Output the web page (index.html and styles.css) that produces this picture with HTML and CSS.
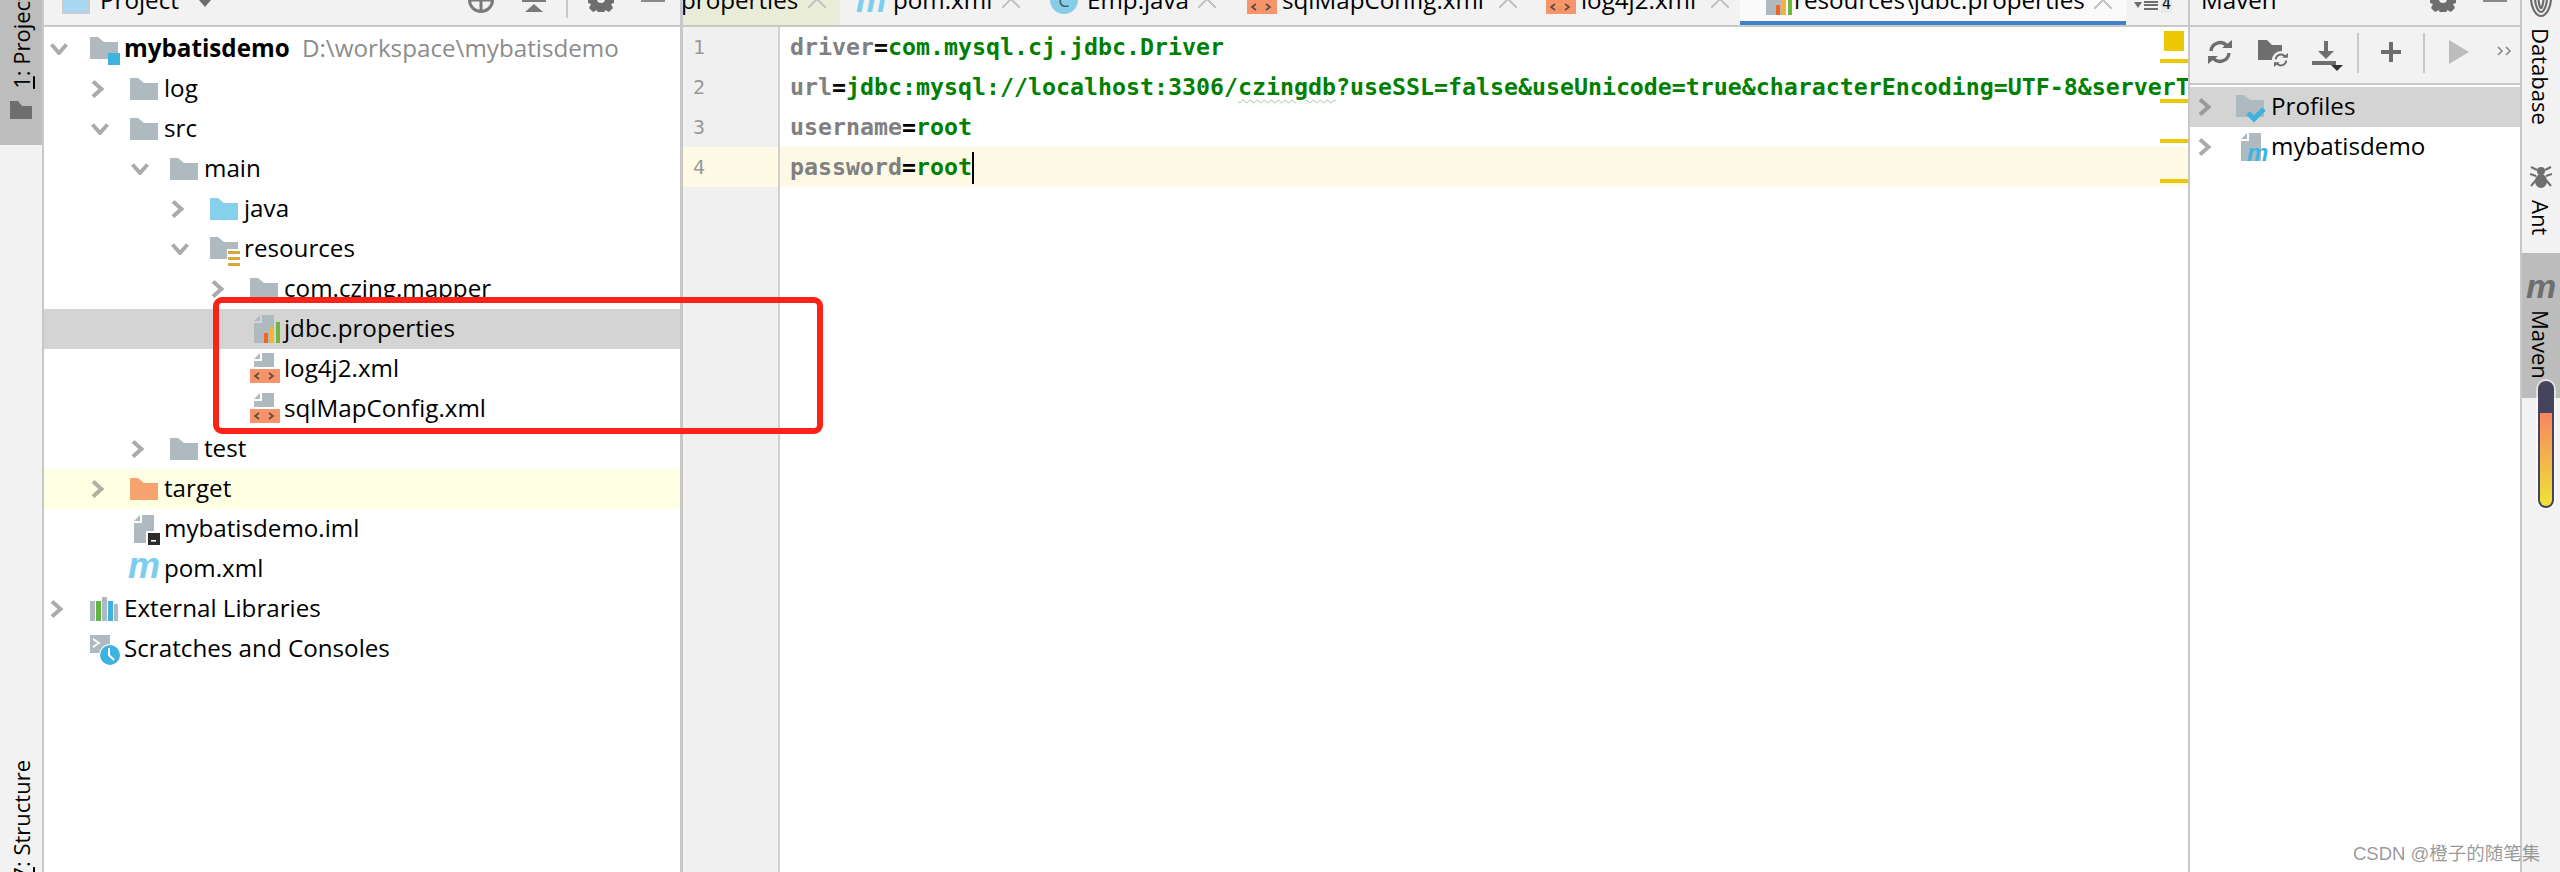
FILE: index.html
```
<!DOCTYPE html>
<html lang="en">
<head>
<meta charset="utf-8">
<title>mybatisdemo</title>
<link rel="stylesheet" href="styles.css">
</head>
<body>
<svg class="sprites" xmlns="http://www.w3.org/2000/svg">
  <symbol id="chev-r" viewBox="0 0 14 18"><path d="M2 1.500 10.500 9 2 16.500" fill="none" stroke="currentColor" stroke-width="4"/></symbol>
  <symbol id="chev-d" viewBox="0 0 18 12"><path d="M1.500 1.500 9 10 16.500 1.500" fill="none" stroke="currentColor" stroke-width="4"/></symbol>
  <symbol id="folder" viewBox="0 0 28 22"><path d="M0 0H8L14 5H28V22H0Z" fill="currentColor"/></symbol>
  <symbol id="module" viewBox="0 0 32 30"><path d="M0 0H8L14 5H28V22H0Z" fill="#aeb9c0"/><rect x="18" y="16" width="12" height="12" fill="#3fb3e0"/></symbol>
  <symbol id="resources" viewBox="0 0 32 30"><path d="M0 0H8L14 5H28V22H0Z" fill="#aeb9c0"/><rect x="17" y="12" width="15" height="18" fill="#fff"/><path d="M18 14h12v3H18zM18 20h12v3H18zM18 26h12v3H18z" fill="#d9a53d"/></symbol>
  <symbol id="page" viewBox="0 0 20 28"><path d="M8 0H20V28H0V8H8Z" fill="#aeb9c0"/><path d="M6 0V6H0Z" fill="#aeb9c0"/></symbol>
  <symbol id="props" viewBox="0 0 30 30"><path d="M12 2H24V30H4V10H12Z" fill="#aeb9c0"/><path d="M10 2V8H4Z" fill="#aeb9c0"/><rect x="14" y="20" width="4" height="10" fill="#f26522"/><rect x="20" y="14" width="4" height="16" fill="#f5b13a"/><rect x="26" y="9" width="4" height="21" fill="#6fb83e"/></symbol>
  <symbol id="xml" viewBox="0 0 30 32"><path d="M12 0H24V14H4V8H12Z" fill="#aeb9c0"/><path d="M10 0V6H4Z" fill="#aeb9c0"/><rect x="0" y="16" width="30" height="14" fill="#f79469"/><path d="M8 20 4 23 8 26M18 20 22 23 18 26" transform="translate(1 0)" fill="none" stroke="#5a4a40" stroke-width="1.600"/></symbol>
  <symbol id="iml" viewBox="0 0 28 32"><path d="M10 2H22V30H2V10H10Z" fill="#aeb9c0"/><path d="M8 2V8H2Z" fill="#aeb9c0"/><rect x="14" y="18" width="14" height="14" fill="#fff"/><rect x="16" y="20" width="12" height="12" fill="#2b2b2b"/><rect x="19" y="27" width="5" height="1.600" fill="#fff"/></symbol>
  <symbol id="libs" viewBox="0 0 28 24"><rect y="4" width="5" height="20" fill="#aeb9c0"/><rect x="6" y="4" width="5" height="20" fill="#62b543"/><rect x="12" width="5" height="24" fill="#aeb9c0"/><rect x="18" y="4" width="5" height="20" fill="#3fb3e0"/><rect x="24" y="7" width="4" height="17" fill="#aeb9c0"/></symbol>
  <symbol id="scratch" viewBox="0 0 30 30"><rect width="20" height="18" fill="#aeb9c0"/><path d="M3 4 9 8 3 12" fill="none" stroke="#fff" stroke-width="1.800"/><circle cx="20" cy="20" r="11" fill="#fff"/><circle cx="20" cy="20" r="10" fill="#3fb3e0"/><path d="M19 13V20L24 25" fill="none" stroke="#fff" stroke-width="2"/></symbol>
  <symbol id="gear" viewBox="0 0 26 26"><path d="M10 0h6l1 4 4-2 4 4-2 4 3 1v6l-3 1 2 4-4 4-4-2-1 4h-6l-1-4-4 2-4-4 2-4-3-1v-6l3-1-2-4 4-4 4 2z" fill="#6e6e6e"/><circle cx="13" cy="13" r="4" fill="#f2f2f2"/></symbol>
  <symbol id="refresh" viewBox="0 0 24 24"><path d="M3 11A9 9 0 0 1 19 6M21 13A9 9 0 0 1 5 18" fill="none" stroke="currentColor" stroke-width="3.400"/><path d="M14 8H24V0ZM10 16H0V24Z" fill="currentColor"/></symbol>
</svg>

<div class="app">
  <aside class="stripe stripe-left">
    <div class="stripe-btn stripe-btn-project">
      <svg class="stripe-folder" viewBox="0 0 22 18"><path d="M0 0H8L12 5H22V18H0Z" fill="#6e6e6e"/></svg>
      <span class="vert up"><u>1</u>: Project</span>
    </div>
    <div class="stripe-btn stripe-btn-structure">
      <span class="vert up"><u>7</u>: Structure</span>
    </div>
  </aside>

  <section class="project">
    <header class="bar project-bar">
      <div class="bar-title">
        <span class="proj-icon"></span>
        <span class="bar-name">Project</span>
        <span class="tri"></span>
      </div>
      <div class="bar-tools">
        <svg class="tool tool-globe" width="28" height="13" viewBox="0 0 28 13"><circle cx="14" cy="0" r="11.500" fill="none" stroke="#7a7a7a" stroke-width="3"/><path d="M14 0V12M2 0H26" stroke="#7a7a7a" stroke-width="3"/></svg>
        <svg class="tool tool-collapse" width="24" height="14" viewBox="0 0 24 14"><rect width="24" height="2" fill="#7a7a7a"/><path d="M12 4 21 12H3Z" fill="#7a7a7a"/></svg>
        <span class="sep sep-short"></span>
        <svg class="tool tool-gear" width="26" height="26"><use href="#gear"/></svg>
        <span class="dash"></span>
      </div>
    </header>
    <div class="tree">
      <div class="row lvl0"><svg class="chev" width="18" height="12"><use href="#chev-d"/></svg><svg class="ico" width="32" height="30"><use href="#module"/></svg><span class="label"><b>mybatisdemo</b> <span class="path">D:\workspace\mybatisdemo</span></span></div>
      <div class="row lvl1"><svg class="chev" width="14" height="18"><use href="#chev-r"/></svg><svg class="ico c-gray" width="28" height="22"><use href="#folder"/></svg><span class="label">log</span></div>
      <div class="row lvl1"><svg class="chev" width="18" height="12"><use href="#chev-d"/></svg><svg class="ico c-gray" width="28" height="22"><use href="#folder"/></svg><span class="label">src</span></div>
      <div class="row lvl2"><svg class="chev" width="18" height="12"><use href="#chev-d"/></svg><svg class="ico c-gray" width="28" height="22"><use href="#folder"/></svg><span class="label">main</span></div>
      <div class="row lvl3"><svg class="chev" width="14" height="18"><use href="#chev-r"/></svg><svg class="ico c-blue" width="28" height="22"><use href="#folder"/></svg><span class="label">java</span></div>
      <div class="row lvl3"><svg class="chev" width="18" height="12"><use href="#chev-d"/></svg><svg class="ico" width="32" height="30"><use href="#resources"/></svg><span class="label">resources</span></div>
      <div class="row lvl4"><svg class="chev" width="14" height="18"><use href="#chev-r"/></svg><svg class="ico c-gray" width="28" height="22"><use href="#folder"/></svg><span class="label">com.czing.mapper</span></div>
      <div class="row lvl5 selected"><svg class="ico" width="30" height="30"><use href="#props"/></svg><span class="label">jdbc.properties</span></div>
      <div class="row lvl5"><svg class="ico" width="30" height="32"><use href="#xml"/></svg><span class="label">log4j2.xml</span></div>
      <div class="row lvl5"><svg class="ico" width="30" height="32"><use href="#xml"/></svg><span class="label">sqlMapConfig.xml</span></div>
      <div class="row lvl2"><svg class="chev" width="14" height="18"><use href="#chev-r"/></svg><svg class="ico c-gray" width="28" height="22"><use href="#folder"/></svg><span class="label">test</span></div>
      <div class="row lvl1 excluded"><svg class="chev" width="14" height="18"><use href="#chev-r"/></svg><svg class="ico c-orange" width="28" height="22"><use href="#folder"/></svg><span class="label">target</span></div>
      <div class="row lvl1l"><svg class="ico" width="28" height="32"><use href="#iml"/></svg><span class="label">mybatisdemo.iml</span></div>
      <div class="row lvl1m"><span class="m-logo">m</span><span class="label">pom.xml</span></div>
      <div class="row lvl0"><svg class="chev" width="14" height="18"><use href="#chev-r"/></svg><svg class="ico" width="28" height="24"><use href="#libs"/></svg><span class="label">External Libraries</span></div>
      <div class="row lvl0n"><svg class="ico" width="30" height="30"><use href="#scratch"/></svg><span class="label">Scratches and Consoles</span></div>
    </div>
    <div class="red-box"></div>
  </section>

  <main class="editor">
    <header class="bar tabs">
      <div class="tab tab-first"><span class="tab-name">properties</span><span class="x"></span></div>
      <div class="tab tab-pom"><span class="m-logo m-tab">m</span><span class="tab-name">pom.xml</span><span class="x"></span></div>
      <div class="tab tab-emp"><span class="c-icon">C</span><span class="tab-name">Emp.java</span><span class="x"></span></div>
      <div class="tab tab-sql"><svg class="tab-xml" width="30" height="32"><use href="#xml"/></svg><span class="tab-name">sqlMapConfig.xml</span><span class="x"></span></div>
      <div class="tab tab-log"><svg class="tab-xml" width="30" height="32"><use href="#xml"/></svg><span class="tab-name">log4j2.xml</span><span class="x"></span></div>
      <div class="tab tab-active"><svg class="tab-props" width="30" height="30"><use href="#props"/></svg><span class="tab-name">resources\jdbc.properties</span><span class="x"></span></div>
      <div class="tab-more"><span class="tri tri-small"></span><span class="lines"></span><span class="more-num">4</span></div>
    </header>
    <div class="code-area">
      <div class="gutter">
        <div class="ln">1</div><div class="ln">2</div><div class="ln">3</div><div class="ln ln-cur">4</div>
      </div>
      <div class="code">
        <div class="line"><span class="k">driver</span><span class="eq">=</span><span class="v">com.mysql.cj.jdbc.Driver</span></div>
        <div class="line"><span class="k">url</span><span class="eq">=</span><span class="v">jdbc:mysql://localhost:3306/<span class="typo">czingdb</span>?useSSL=false&amp;useUnicode=true&amp;characterEncoding=UTF-8&amp;serverTimezone=UTC</span></div>
        <div class="line"><span class="k">username</span><span class="eq">=</span><span class="v">root</span></div>
        <div class="line line-cur"><span class="k">password</span><span class="eq">=</span><span class="v">root</span><span class="caret"></span></div>
      </div>
      <div class="marks">
        <span class="mark-square"></span>
        <span class="mark"></span><span class="mark"></span><span class="mark"></span><span class="mark"></span>
      </div>
    </div>
  </main>

  <section class="maven">
    <header class="bar maven-bar">
      <span class="bar-name">Maven</span>
      <div class="bar-tools">
        <svg class="tool tool-gear" width="26" height="26"><use href="#gear"/></svg>
        <span class="dash"></span>
      </div>
    </header>
    <div class="mvn-tools">
      <svg class="mt mt-refresh" width="24" height="24"><use href="#refresh"/></svg>
      <svg class="mt" width="32" height="28" viewBox="0 0 32 28"><path d="M0 0H9L14 5H24V20H0Z" fill="#6e6e6e"/><circle cx="23" cy="20" r="9" fill="#f2f2f2"/><g transform="translate(16 13) scale(.58)"><path d="M3 11A9 9 0 0 1 19 6M21 13A9 9 0 0 1 5 18" fill="none" stroke="#6e6e6e" stroke-width="3.400"/><path d="M14 8H24V0ZM10 16H0V24Z" fill="#6e6e6e"/></g></svg>
      <svg class="mt" width="32" height="30" viewBox="0 0 32 30"><path d="M12 0h4v10h6l-8 8-8-8h6z" fill="#6e6e6e"/><rect y="20" width="24" height="4" fill="#6e6e6e"/><path d="M19 24H31L25 30Z" fill="#333"/></svg>
      <span class="sep sep-tall"></span>
      <svg class="mt" width="20" height="20" viewBox="0 0 20 20"><path d="M8 0h4v8h8v4h-8v8H8v-8H0V8h8z" fill="#6e6e6e"/></svg>
      <span class="sep sep-tall"></span>
      <svg class="mt" width="20" height="24" viewBox="0 0 20 24"><path d="M0 0 20 12 0 24Z" fill="#bcbcbc"/></svg>
      <svg class="mt mt-more" width="15" height="10" viewBox="0 0 15 10"><path d="M1 1 5 5 1 9M9 1 13 5 9 9" fill="none" stroke="#8a8a8a" stroke-width="1.600"/></svg>
    </div>
    <div class="mvn-tree">
      <div class="mrow selected"><svg class="chev" width="14" height="18"><use href="#chev-r"/></svg>
        <svg class="mico" width="32" height="28" viewBox="0 0 32 28"><path d="M0 0H8L14 5H28V22H0Z" fill="#aeb9c0"/><path d="M12 18 18 24 28 14" fill="none" stroke="#3fb3e0" stroke-width="5"/></svg>
        <span class="label">Profiles</span></div>
      <div class="mrow"><svg class="chev" width="14" height="18"><use href="#chev-r"/></svg>
        <span class="mod-ico"><svg width="22" height="28"><use href="#page"/></svg><span class="m-logo m-mini">m</span></span>
        <span class="label">mybatisdemo</span></div>
    </div>
  </section>

  <aside class="stripe stripe-right">
    <svg class="db-ico" width="22" height="18" viewBox="0 0 22 18"><path d="M1 -2C1 8 6 16 11 16S21 8 21 -2M5 -2C5 5 8 12 11 12S17 5 17 -2M8.500 -2C8.500 3 10 8 11 8S13.500 3 13.500 -2" fill="none" stroke="#6e6e6e" stroke-width="2.200"/></svg>
    <span class="vert down rt-database">Database</span>
    <svg class="ant-ico" width="22" height="24" viewBox="0 0 22 24"><g stroke="#6e6e6e" stroke-width="2" fill="none"><path d="M7 4 1 1M15 4 21 1M6 10 0 8M16 10 22 8M6 14 1 20M16 14 21 20"/></g><circle cx="11" cy="5" r="4" fill="#6e6e6e"/><ellipse cx="11" cy="15" rx="6" ry="7" fill="#6e6e6e"/></svg>
    <span class="vert down rt-ant">Ant</span>
    <div class="stripe-btn-maven">
      <span class="m-logo m-gray">m</span>
      <span class="vert down rt-maven">Maven</span>
    </div>
  </aside>
</div>

<div class="memory"><span class="memory-fill"></span></div>
<div class="watermark">CSDN @橙子的随笔集</div>
</body>
</html>
```

FILE: styles.css
```
* { box-sizing: border-box; }
html, body { margin: 0; padding: 0; height: 872px; overflow: hidden; background: #fff; }
body {
  position: relative;
  font-family: "Open Sans", "Noto Sans", "Liberation Sans", sans-serif;
  font-size: 24.2px;
  color: #000;
}
svg { display: block; flex: none; }
.sprites { display: none; }
.app { display: flex; height: 872px; overflow: hidden; }

/* side stripes */
.stripe { background: #f2f2f2; flex: none; display: flex; flex-direction: column; overflow: hidden; height: 872px; }
.stripe-left { width: 44px; border-right: 2px solid #c8c8c8; justify-content: space-between; }
.stripe-right { width: 38px; align-items: center; }
.vert { writing-mode: vertical-rl; white-space: nowrap; font-size: 22px; line-height: 28px; }
.vert.up { transform: rotate(180deg); }
.stripe-btn-project { height: 145px; flex: none; background: #bdbdbd; display: flex; flex-direction: column-reverse; align-items: center; padding-bottom: 26px; gap: 12px; justify-content: flex-start; }
.stripe-folder { width: 22px; height: 18px; }
.stripe-btn-structure { height: 132px; margin-bottom: -14px; flex: none; display: flex; align-items: center; justify-content: center; }

/* header bars */
.bar { height: 27px; flex: none; background: #f2f2f2; border-bottom: 2px solid #c8c8c8; display: flex; align-items: flex-end; overflow: hidden; }
.bar > * { flex: none; }
.bar-name { line-height: 50px; }
.bar-title, .bar-tools { height: 50px; display: flex; align-items: center; }
.project-bar { justify-content: space-between; padding-left: 18px; }
.proj-icon { width: 28px; height: 28px; background: #a7daf2; border: 2px solid #c3cdd3; margin-right: 10px; }
.tri { width: 0; height: 0; border-left: 6px solid transparent; border-right: 6px solid transparent; border-top: 7px solid #6e6e6e; margin: 6px 0 0 20px; align-self: center; }
.project-bar .bar-tools { gap: 0; padding-right: 15px; }
.tool-globe { align-self: flex-start; margin-top: 25px; }
.tool-collapse { margin: 25px 0 0 27px; align-self: flex-start; }
.sep { background: #c8c8c8; width: 2px; display: block; }
.sep-short { height: 18px; align-self: flex-start; margin: 25px 20px 0 20px; }
.tool-gear { margin-top: -2px; }
.dash { width: 24px; height: 2px; background: #8a8a8a; align-self: flex-start; margin: 25px 0 0 27px; }

/* project tree */
.project { width: 639px; flex: none; border-right: 3px solid #c8c8c8; position: relative; }
.tree { padding-top: 2px; }
.row { height: 40px; display: flex; align-items: center; position: relative; white-space: nowrap; color: #000; }
.chev { color: #ababab; position: absolute; }
.ico { position: absolute; }
.label { position: absolute; line-height: 40px; top: -1px; }
.path { color: #8c8c8c; margin-left: 6px; }
.c-gray { color: #aeb9c0; }
.c-blue { color: #87d0ec; }
.c-orange { color: #f6a36f; }
.lvl0 .chev { left: 6px; } .lvl0 .ico { left: 46px; } .lvl0 .label { left: 80px; }
.lvl0 .ico { top: 8px; }
.lvl0n .ico { left: 46px; top: 6px; } .lvl0n .label { left: 80px; }
.lvl1 .chev { left: 47px; } .lvl1 .ico { left: 86px; } .lvl1 .label { left: 120px; }
.lvl2 .chev { left: 87px; } .lvl2 .ico { left: 126px; } .lvl2 .label { left: 160px; }
.lvl3 .chev { left: 127px; } .lvl3 .ico { left: 166px; } .lvl3 .label { left: 200px; }
.lvl3 .ico[height="30"] { top: 8px; }
.lvl4 .chev { left: 167px; } .lvl4 .ico { left: 206px; } .lvl4 .label { left: 240px; }
.lvl5 .ico { left: 206px; top: 4px; } .lvl5 .label { left: 240px; }
.lvl1l .ico { left: 88px; top: 4px; } .lvl1l .label { left: 120px; }
.lvl1m .label { left: 120px; }
.selected { background: #d4d4d4; }
.excluded { background: #ffffe3; }
.excluded .chev { color: #b0b0a4; }
.m-logo { font-family: "Liberation Sans", sans-serif; font-style: italic; font-weight: 700; color: #7ccdee; font-size: 36px; line-height: 40px; }
.lvl1m .m-logo { position: absolute; left: 84px; top: -3px; }
.red-box { position: absolute; left: 169px; top: 297px; width: 610px; height: 137px; border: 6px solid #fb2318; border-radius: 9px; z-index: 5; }

/* editor */
.editor { width: 1507px; flex: none; border-right: 2px solid #c8c8c8; display: flex; flex-direction: column; }
.tabs { position: relative; }
.tab { height: 50px; display: flex; align-items: center; position: relative; white-space: nowrap; flex: none; }
.tab-name { line-height: 50px; }
.x { width: 18px; height: 18px; position: absolute; top: 15px; background:
  linear-gradient(45deg, transparent 46%, #c4c4c4 46%, #c4c4c4 54%, transparent 54%),
  linear-gradient(-45deg, transparent 46%, #c4c4c4 46%, #c4c4c4 54%, transparent 54%); }
.tab-first { width: 157px; background: #e9ecd6; margin-bottom: -2px; height: 52px; padding-bottom: 2px; }
.tab-first .tab-name { margin-left: -2px; }
.tab-first .x { left: 125px; }
.tab-pom { width: 196px; padding-left: 16px; }
.m-tab { width: 37px; font-size: 34px; }
.tab-pom .x { left: 162px; }
.tab-emp { width: 200px; padding-left: 14px; }
.c-icon { width: 28px; height: 28px; border-radius: 50%; background: #87cde8; color: #3c5a66; font-size: 18px; display: flex; align-items: center; justify-content: center; margin-right: 9px; }
.tab-emp .x { left: 162px; }
.tab-sql { width: 310px; padding-left: 11px; }
.tab-xml { margin-right: 5px; }
.tab-sql .x { left: 263px; }
.tab-log { width: 194px; padding-left: 0; }
.tab-log .x { left: 165px; }
.tab-active { width: 386px; height: 48px; padding-left: 22px; background: #fafafa; margin-bottom: -2px; border-bottom: 6px solid #4083c9; }
.tab-active .tab-name { margin-left: 2px; }
.tab-active .x { left: 354px; top: 12px; }
.tab-more { height: 50px; display: flex; align-items: center; padding-left: 8px; gap: 2px; font-size: 15px; }
.tab-more .tri { margin: 10px 0 0 0; border-left-width: 4px; border-right-width: 4px; border-top-width: 6px; }
.lines { width: 14px; height: 9px; margin-top: 10px; border-top: 2px solid #6e6e6e; border-bottom: 2px solid #6e6e6e; background: linear-gradient(#6e6e6e, #6e6e6e) center / 100% 2px no-repeat; }
.more-num { background: #e8e8e8; padding: 0 1px; margin: 8px 0 0 1px; line-height: 18px; font-family: "DejaVu Sans Mono", monospace; }

.code-area { display: flex; position: relative; flex: 1; min-height: 0; overflow: hidden; }
.gutter { width: 97px; flex: none; background: #f0f0f0; border-right: 2px solid #d0d0d0; font-family: "DejaVu Sans Mono", monospace; font-size: 20px; color: #999; }
.ln { height: 40px; line-height: 40px; padding-left: 10px; }
.ln-cur { background: #fefae6; }
.code { flex: 1; min-width: 0; font-family: "DejaVu Sans Mono", "Liberation Mono", monospace; font-size: 23.25px; font-weight: 700; overflow: hidden; }
.line { height: 40px; line-height: 40px; padding-left: 10px; white-space: nowrap; }
.line-cur { background: #fef9e5; }
.k { color: #808080; }
.eq { color: #000; }
.v { color: #008000; }
.typo { text-decoration: underline wavy #9ec79e 1px; text-underline-offset: 4px; }
.caret { display: inline-block; width: 2px; height: 32px; background: #000; vertical-align: -9px; }
.marks { position: absolute; right: 0; top: 4px; width: 28px; display: flex; flex-direction: column; align-items: flex-end; }
.mark-square { width: 20px; height: 20px; background: #edc800; margin-right: 4px; }
.mark { width: 28px; height: 4px; background: #edc800; margin-top: 8px; }
.mark + .mark { margin-top: 36px; }

/* maven */
.maven { width: 332px; flex: none; border-right: 2px solid #c8c8c8; }
.maven-bar { padding-left: 11px; justify-content: space-between; }
.maven-bar .bar-tools { padding-right: 13px; }
.mvn-tools { height: 58px; background: #f2f2f2; border-bottom: 2px solid #c8c8c8; display: flex; align-items: center; padding-left: 18px; }
.mvn-tools > svg { margin-top: -6px; }
.mt-refresh { color: #6e6e6e; margin-right: 26px; }
.mvn-tools svg:nth-child(2) { margin-right: 22px; margin-top: -2px; }
.mvn-tools svg:nth-child(3) { margin-right: 13px; margin-top: 2px; }
.sep-tall { height: 40px; margin-top: -4px; }
.mvn-tools svg:nth-child(5) { margin: -6px 22px 0 22px; }
.mvn-tools svg:nth-child(7) { margin: -6px 0 0 24px; }
.mvn-tools .mt-more { margin: -8px 0 0 28px; }
.mvn-tree { padding-top: 2px; }
.mrow { height: 40px; position: relative; }
.mrow .chev { left: 8px; top: 11px; }
.mrow .label { left: 81px; top: -1px; white-space: nowrap; }
.mico { position: absolute; left: 46px; top: 8px; }
.mod-ico { position: absolute; left: 50px; top: 6px; width: 30px; height: 30px; }
.m-mini { position: absolute; left: 7px; top: 5px; font-size: 24px; line-height: 30px; color: #3fb3e0; }
.selected .chev { color: #9a9a9a; }

/* right stripe */
.rt-database { margin-top: 10px; }
.ant-ico { margin-top: 41px; }
.rt-ant { margin-top: 10px; }
.stripe-btn-maven { width: 38px; margin-top: auto; margin-bottom: 474px; height: 145px; background: #bcbcbc; display: flex; flex-direction: column; align-items: center; padding-top: 16px; flex: none; }
.m-gray { color: #6e6e6e; font-size: 34px; line-height: 34px; }
.rt-maven { margin-top: 7px; }

/* overlays */
.memory { position: absolute; left: 2538px; top: 381px; width: 16px; height: 127px; background: #44445c; border-radius: 8px; box-shadow: 0 0 0 2px rgba(255,255,255,.55); padding: 32px 2px 0; overflow: hidden; }
.memory-fill { display: block; height: 93px; background: linear-gradient(#f98660, #eee337); border-radius: 0 0 6px 6px; }
.watermark { position: absolute; left: 2353px; top: 842px; font-family: "Liberation Sans", "Noto Sans CJK SC", sans-serif; font-size: 18.5px; line-height: 24px; color: rgba(120,120,120,.75); white-space: nowrap; }
```
